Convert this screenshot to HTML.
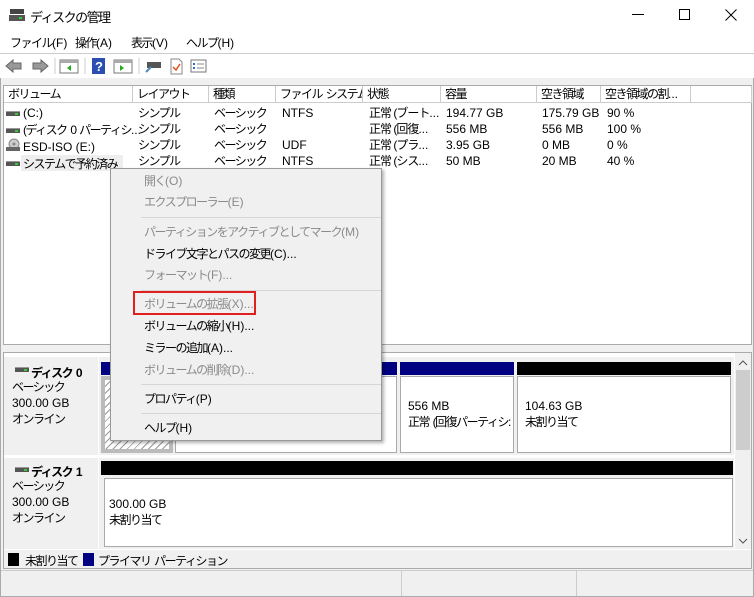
<!DOCTYPE html>
<html><head><meta charset="utf-8"><style>
*{margin:0;padding:0;box-sizing:border-box}
body{width:754px;height:597px;background:#f0f0f0;font-family:"Liberation Sans","Noto Sans CJK JP",sans-serif;font-size:12px;color:#000;position:relative;overflow:hidden}
.a{position:absolute;white-space:nowrap}
.j{letter-spacing:-1.5px}
.win{position:absolute;left:0;top:0;width:754px;height:597px;border:1px solid #aaa}
.hd{position:absolute;top:86px;height:17px;background:#fff;border-right:1px solid #ccc;border-bottom:1px solid #ccc;padding-left:4px;line-height:16px;font-size:12px;letter-spacing:-1.5px;overflow:hidden;white-space:nowrap}
.row{position:absolute;font-size:12px;line-height:16px;white-space:nowrap}
.mi{position:absolute;left:33px;font-size:12px;line-height:16px;white-space:nowrap;letter-spacing:-1.5px}
.g{color:#8a8a8a}
.sep{position:absolute;left:30px;width:240px;height:1px;background:#d5d5d5}
.dk{position:absolute;width:14px;height:5px;background:#555;border-top:1px solid #999}
.dk:after{content:"";position:absolute;right:2px;top:1px;width:3px;height:2px;background:#3c3}
.l{letter-spacing:0}
</style></head><body>
<div class="win"></div>
<div class="a" style="left:0;top:0;width:754px;height:53px;background:#fff"></div>
<svg class="a" style="left:9px;top:8px" width="16" height="14"><rect x="1" y="1" width="14" height="5" fill="#444"/><rect x="0" y="7" width="16" height="6" fill="#555"/><rect x="10" y="9" width="3" height="2" fill="#3c3"/></svg>
<div class="a j" style="left:30px;top:7px;font-size:13px">ディスクの管理</div>
<div class="a" style="left:632px;top:14px;width:12px;height:1px;background:#000"></div>
<div class="a" style="left:679px;top:9px;width:11px;height:11px;border:1px solid #000"></div>
<svg class="a" style="left:725px;top:9px" width="12" height="12"><path d="M0.5 0.5L11.5 11.5M11.5 0.5L0.5 11.5" stroke="#000"/></svg>
<div class="a j" style="left:10px;top:34px">ファイル<span class="l">(F)</span></div>
<div class="a j" style="left:75px;top:34px">操作<span class="l">(A)</span></div>
<div class="a j" style="left:131px;top:34px">表示<span class="l">(V)</span></div>
<div class="a j" style="left:186px;top:34px">ヘルプ<span class="l">(H)</span></div>
<div class="a" style="left:0;top:53px;width:754px;height:1px;background:#ccc"></div>
<div class="a" style="left:0;top:54px;width:754px;height:24px;background:#fff"></div>
<svg class="a" style="left:5px;top:57px" width="220" height="18">
<path d="M1 9L8 3V6H16V12H8V15Z" fill="#999" stroke="#666"/>
<path d="M43 9L36 3V6H28V12H36V15Z" fill="#999" stroke="#666"/>
<line x1="50" y1="1" x2="50" y2="17" stroke="#ccc"/>
<rect x="55" y="3" width="18" height="13" fill="#fff" stroke="#777"/><rect x="55" y="3" width="18" height="3" fill="#aaa"/><path d="M66 8L62 11L66 14Z" fill="#2a2"/>
<line x1="80" y1="1" x2="80" y2="17" stroke="#ccc"/>
<rect x="87" y="1" width="13" height="16" fill="#2a4fb0"/><text x="90" y="14" fill="#fff" font-size="13" font-weight="bold" font-family="Liberation Sans">?</text>
<rect x="109" y="3" width="18" height="13" fill="#fff" stroke="#777"/><rect x="109" y="3" width="18" height="3" fill="#aaa"/><path d="M115 8L119 11L115 14Z" fill="#2a2"/>
<line x1="134" y1="1" x2="134" y2="17" stroke="#ccc"/>
<rect x="142" y="5" width="14" height="6" fill="#555"/><line x1="141" y1="15" x2="146" y2="10" stroke="#4a8ac0" stroke-width="2"/>
<path d="M166 2H174L177 5V17H166Z" fill="#fff" stroke="#888"/><path d="M168 10L171 13L175 7" stroke="#e05020" fill="none" stroke-width="1.5"/>
<rect x="186" y="3" width="15" height="12" fill="#fff" stroke="#777"/><line x1="192" y1="7" x2="199" y2="7" stroke="#888"/><line x1="192" y1="11" x2="199" y2="11" stroke="#888"/><rect x="188" y="6" width="2" height="2" fill="#36c"/><rect x="188" y="10" width="2" height="2" fill="#36c"/>
</svg>
<div class="a" style="left:3px;top:85px;width:749px;height:260px;background:#fff;border:1px solid #aaa"></div>
<div class="hd" style="left:4px;width:129px">ボリューム</div>
<div class="hd" style="left:133px;width:76px">レイアウト</div>
<div class="hd" style="left:209px;width:67px">種類</div>
<div class="hd" style="left:276px;width:87px">ファイル&nbsp; システム</div>
<div class="hd" style="left:363px;width:78px">状態</div>
<div class="hd" style="left:441px;width:96px">容量</div>
<div class="hd" style="left:537px;width:64px">空き領域</div>
<div class="hd" style="left:601px;width:90px">空き領域の割<span class="l">...</span></div>
<div class="hd" style="left:691px;width:61px"></div>
<div class="a" style="left:21px;top:155px;width:102px;height:16px;background:#eee"></div>
<div class="dk" style="left:6px;top:111px"></div><div class="dk" style="left:6px;top:128px"></div>
<svg class="a" style="left:6px;top:138px" width="14" height="14"><circle cx="8" cy="6" r="5" fill="#ccc" stroke="#888"/><circle cx="8" cy="6" r="1.5" fill="#888"/><rect x="0" y="9" width="14" height="4" fill="#666"/></svg>
<div class="dk" style="left:6px;top:161px"></div>
<div class="row" style="left:23px;top:105px">(C:)</div>
<div class="row j" style="left:23px;top:122px">(ディスク&nbsp; 0&nbsp; パーティシ<span class="l">...</span></div>
<div class="row" style="left:23px;top:139px">ESD-ISO (E:)</div>
<div class="row j" style="left:23px;top:156px">システムで予約済み</div>
<div class="row j" style="left:138px;top:105px">シンプル<br>シンプル<br>シンプル<br>シンプル</div>
<div class="row j" style="left:214px;top:105px">ベーシック<br>ベーシック<br>ベーシック<br>ベーシック</div>
<div class="row" style="left:282px;top:105px">NTFS<br>&nbsp;<br>UDF<br>NTFS</div>
<div class="row" style="left:369px;top:105px;letter-spacing:-1px">正常 (ブート<span class="l">...</span><br>正常 (回復<span class="l">...</span><br>正常 (プラ<span class="l">...</span><br>正常 (シス<span class="l">...</span></div>
<div class="row" style="left:446px;top:105px">194.77 GB<br>556 MB<br>3.95 GB<br>50 MB</div>
<div class="row" style="left:542px;top:105px">175.79 GB<br>556 MB<br>0 MB<br>20 MB</div>
<div class="row" style="left:607px;top:105px">90 %<br>100 %<br>0 %<br>40 %</div>
<div class="a" style="left:3px;top:352px;width:749px;height:217px;background:#fff;border:1px solid #aaa"></div>
<div class="a" style="left:4px;top:357px;width:94px;height:98px;background:#f0f0f0"></div>
<div class="a" style="left:4px;top:458px;width:94px;height:91px;background:#f0f0f0"></div>
<div class="a" style="left:99px;top:357px;width:635px;height:98px;background:#f0f0f0"></div>
<div class="a" style="left:99px;top:458px;width:635px;height:91px;background:#f0f0f0"></div>
<div class="dk" style="left:15px;top:367px"></div>
<div class="a j" style="left:31px;top:364px;font-weight:bold">ディスク&nbsp; 0</div>
<div class="a j" style="left:12px;top:379px;line-height:16px">ベーシック<br><span class="l">300.00 GB</span><br>オンライン</div>
<div class="dk" style="left:15px;top:467px"></div>
<div class="a j" style="left:31px;top:463px;font-weight:bold">ディスク&nbsp; 1</div>
<div class="a j" style="left:12px;top:478px;line-height:16px">ベーシック<br><span class="l">300.00 GB</span><br>オンライン</div>
<div class="a" style="left:101px;top:362px;width:296px;height:13px;background:#000080"></div>
<div class="a" style="left:400px;top:362px;width:114px;height:13px;background:#000080"></div>
<div class="a" style="left:517px;top:362px;width:214px;height:13px;background:#000"></div>
<div class="a" style="left:101px;top:376px;width:72px;height:77px;background:#bbb"></div>
<div class="a" style="left:105px;top:380px;width:64px;height:69px;background:repeating-linear-gradient(135deg,#fff 0 4px,#999 4px 5px)"></div>
<div class="a" style="left:175px;top:376px;width:222px;height:77px;background:#fff;border:1px solid #aaa"></div>
<div class="a" style="left:400px;top:376px;width:114px;height:77px;background:#fff;border:1px solid #aaa;overflow:hidden"></div>
<div class="a" style="left:408px;top:398px;line-height:16px;width:104px;overflow:hidden">556 MB<br><span class="j">正常&nbsp; (回復パーティシ:</span></div>
<div class="a" style="left:517px;top:376px;width:214px;height:77px;background:#fff;border:1px solid #aaa"></div>
<div class="a" style="left:525px;top:398px;line-height:16px">104.63 GB<br><span class="j">未割り当て</span></div>
<div class="a" style="left:101px;top:461px;width:632px;height:14px;background:#000"></div>
<div class="a" style="left:104px;top:478px;width:629px;height:69px;background:#fff;border:1px solid #aaa"></div>
<div class="a" style="left:109px;top:496px;line-height:16px">300.00 GB<br><span class="j">未割り当て</span></div>
<div class="a" style="left:735px;top:353px;width:16px;height:196px;background:#f0f0f0"></div>
<div class="a" style="left:736px;top:370px;width:14px;height:80px;background:#cdcdcd"></div>
<svg class="a" style="left:738px;top:360px" width="10" height="6"><path d="M1 5L5 1L9 5" stroke="#555" fill="none"/></svg>
<svg class="a" style="left:738px;top:538px" width="10" height="6"><path d="M1 1L5 5L9 1" stroke="#555" fill="none"/></svg>
<div class="a" style="left:4px;top:550px;width:747px;height:18px;background:#f0f0f0"></div>
<div class="a" style="left:8px;top:553px;width:11px;height:13px;background:#000"></div>
<div class="a j" style="left:25px;top:552px">未割り当て</div>
<div class="a" style="left:83px;top:553px;width:11px;height:13px;background:#000080"></div>
<div class="a j" style="left:98px;top:552px">プライマリ&nbsp; パーティション</div>
<div class="a" style="left:1px;top:570px;width:752px;height:1px;background:#ccc"></div>
<div class="a" style="left:401px;top:571px;width:1px;height:25px;background:#ccc"></div>
<div class="a" style="left:576px;top:571px;width:1px;height:25px;background:#ccc"></div>
<div class="a" style="left:110px;top:168px;width:272px;height:273px;background:#f0f0f0;border:1px solid #999;box-shadow:2px 2px 3px rgba(0,0,0,.3)">
<div class="mi g" style="top:4px">開く<span class="l">(O)</span></div>
<div class="mi g" style="top:25px">エクスプローラー<span class="l">(E)</span></div>
<div class="sep" style="top:48px"></div>
<div class="mi g" style="top:55px">パーティションをアクティブとしてマーク<span class="l">(M)</span></div>
<div class="mi" style="top:77px">ドライブ文字とパスの変更<span class="l">(C)...</span></div>
<div class="mi g" style="top:98px">フォーマット<span class="l">(F)...</span></div>
<div class="sep" style="top:121px"></div>
<div class="mi g" style="top:127px">ボリュームの拡張<span class="l">(X)...</span></div>
<div class="a" style="left:22px;top:122px;width:123px;height:24px;border:2px solid #e02020"></div>
<div class="mi" style="top:149px">ボリュームの縮小<span class="l">(H)...</span></div>
<div class="mi" style="top:171px">ミラーの追加<span class="l">(A)...</span></div>
<div class="mi g" style="top:193px">ボリュームの削除<span class="l">(D)...</span></div>
<div class="sep" style="top:215px"></div>
<div class="mi" style="top:222px">プロパティ<span class="l">(P)</span></div>
<div class="sep" style="top:244px"></div>
<div class="mi" style="top:251px">ヘルプ<span class="l">(H)</span></div>
</div>
</body></html>
